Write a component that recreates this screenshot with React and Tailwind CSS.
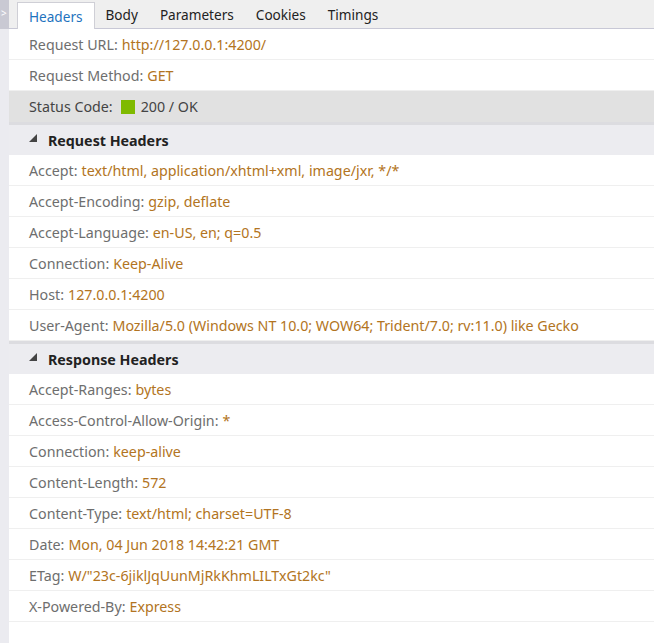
import React from "react";

const requestHeaders = [
  ["Accept", "text/html, application/xhtml+xml, image/jxr, */*"],
  ["Accept-Encoding", "gzip, deflate"],
  ["Accept-Language", "en-US, en; q=0.5"],
  ["Connection", "Keep-Alive"],
  ["Host", "127.0.0.1:4200"],
  ["User-Agent", "Mozilla/5.0 (Windows NT 10.0; WOW64; Trident/7.0; rv:11.0) like Gecko"],
];

const responseHeaders = [
  ["Accept-Ranges", "bytes"],
  ["Access-Control-Allow-Origin", "*"],
  ["Connection", "keep-alive"],
  ["Content-Length", "572"],
  ["Content-Type", "text/html; charset=UTF-8"],
  ["Date", "Mon, 04 Jun 2018 14:42:21 GMT"],
  ["ETag", 'W/"23c-6jiklJqUunMjRkKhmLILTxGt2kc"'],
  ["X-Powered-By", "Express"],
];

const tabs = ["Headers", "Body", "Parameters", "Cookies", "Timings"];

function Row({ label, value }) {
  return (
    <div className="h-[31px] flex items-center pl-5 pt-px border-b border-[#efefef] bg-white whitespace-nowrap">
      <span className="text-[#6e6e6e]">{label}:</span>
      <span className="ml-1 text-[#b27422]">{value}</span>
    </div>
  );
}

function Section({ title }) {
  return (
    <div className="h-[33px] flex items-center border-t-[3px] border-[#dcdce0] bg-[#ececf0] pl-5 pt-px">
      <svg width="9" height="9" viewBox="0 0 9 9" className="mb-1">
        <polygon points="8,0 8,8 0,8" fill="#444" />
      </svg>
      <span className="ml-[10px] font-bold text-[#222]">{title}</span>
    </div>
  );
}

export default function App() {
  return (
    <div
      className="flex w-[654px] h-[643px] overflow-hidden text-[14.25px] bg-white"
      style={{ fontFamily: '"Noto Sans", "Open Sans", sans-serif' }}
    >
      <div className="w-[9px] shrink-0 bg-[#ebebf0] flex flex-col">
        <div className="h-[29px] bg-[#c9c9d3] text-white text-[10px] leading-[26px] pl-[1px]">&gt;</div>
      </div>
      <div className="flex-1 flex flex-col">
        <div className="h-[29px] flex items-end bg-[#efefef] border-b border-[#c8c8d6] pl-2 text-[13.6px]">
          {tabs.map((t, i) => (
            <div
              key={t}
              className={
                i === 0
                  ? "h-[27px] px-[11px] pt-[2px] flex items-center bg-white border border-b-0 border-[#cfcfd6] text-[#1e73be] -mb-px"
                  : "h-[27px] px-[11px] pt-[2px] flex items-center text-[#222]"
              }
            >
              {t}
            </div>
          ))}
        </div>
        <Row label="Request URL" value="http://127.0.0.1:4200/" />
        <Row label="Request Method" value="GET" />
        <div className="h-[31px] flex items-center pl-5 pt-px bg-[#e1e1e1] text-[#444]">
          <span>Status Code:</span>
          <span className="ml-[8px] w-[14px] h-[14px] bg-[#7fba00]" />
          <span className="ml-[6px]">200 / OK</span>
        </div>
        <Section title="Request Headers" />
        {requestHeaders.map(([k, v]) => (
          <Row key={k} label={k} value={v} />
        ))}
        <Section title="Response Headers" />
        {responseHeaders.map(([k, v]) => (
          <Row key={k} label={k} value={v} />
        ))}
      </div>
    </div>
  );
}
